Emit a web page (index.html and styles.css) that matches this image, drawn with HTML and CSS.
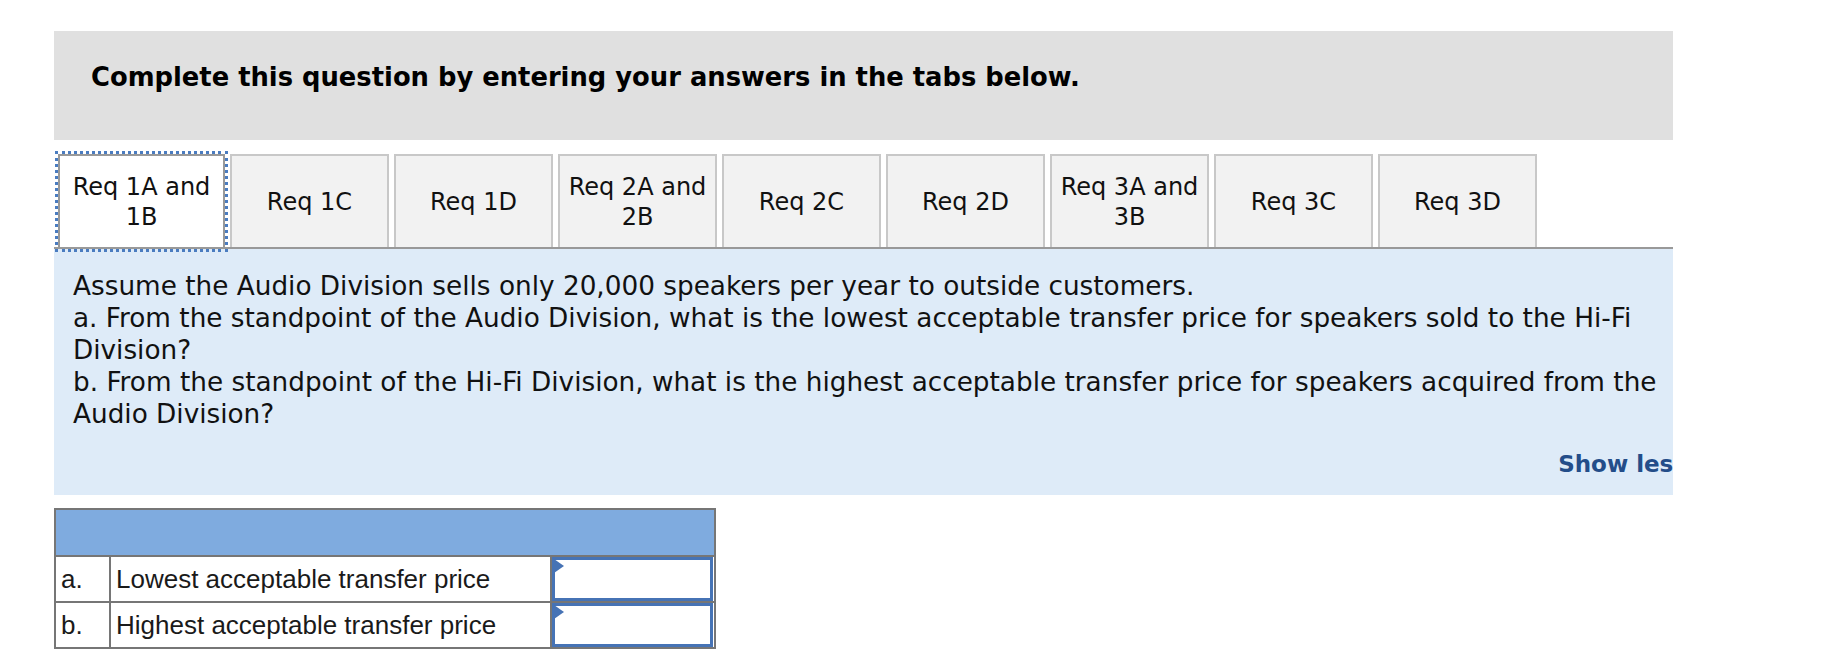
FILE: index.html
```html
<!DOCTYPE html>
<html>
<head>
<meta charset="utf-8">
<link rel="stylesheet" href="styles.css">
</head>
<body>
<div class="wrap">
  <div class="banner">
    <h1 class="banner-title">Complete this question by entering your answers in the tabs below.</h1>
  </div>

  <div class="tabs">
    <div class="tab tab-active">Req 1A and<br>1B</div>
    <div class="tab">Req 1C</div>
    <div class="tab">Req 1D</div>
    <div class="tab">Req 2A and<br>2B</div>
    <div class="tab">Req 2C</div>
    <div class="tab">Req 2D</div>
    <div class="tab">Req 3A and<br>3B</div>
    <div class="tab">Req 3C</div>
    <div class="tab">Req 3D</div>
  </div>

  <div class="panel">
    <p class="panel-text">Assume the Audio Division sells only 20,000 speakers per year to outside customers.<br>a. From the standpoint of the Audio Division, what is the lowest acceptable transfer price for speakers sold to the Hi-Fi Division?<br>b. From the standpoint of the Hi-Fi Division, what is the highest acceptable transfer price for speakers acquired from the Audio Division?</p>
    <div class="panel-foot"><span class="show-less">Show less</span></div>
  </div>

  <table class="answers">
    <colgroup>
      <col class="col-letter">
      <col class="col-label">
      <col class="col-input">
    </colgroup>
    <tr class="answers-head"><td colspan="3"></td></tr>
    <tr>
      <td class="c-letter">a.</td>
      <td class="c-label">Lowest acceptable transfer price</td>
      <td class="c-input"><div class="input-box"><span class="input-flag"></span></div></td>
    </tr>
    <tr>
      <td class="c-letter">b.</td>
      <td class="c-label">Highest acceptable transfer price</td>
      <td class="c-input"><div class="input-box"><span class="input-flag"></span></div></td>
    </tr>
  </table>
</div>
</body>
</html>
```

FILE: styles.css
```css
html, body {
  margin: 0;
  padding: 0;
  background: #ffffff;
}

body {
  font-family: "DejaVu Sans", Verdana, sans-serif;
  color: #000;
}

.wrap {
  margin-left: 54px;
  width: 1619px;
  padding-top: 31px;
}

.banner {
  background: #e0e0e0;
  height: 109px;
  box-sizing: border-box;
  padding: 31px 0 0 37px;
}

.banner-title {
  margin: 0;
  font-size: 25.8px;
  line-height: 30px;
  font-weight: bold;
}

.tabs {
  margin-top: 14px;
  display: flex;
  border-bottom: 2px solid #999999;
}

.tab {
  box-sizing: border-box;
  width: 159px;
  height: 93px;
  margin-left: 5px;
  background: #f2f2f2;
  border: 2px solid #c8c8c8;
  border-bottom: none;
  display: flex;
  align-items: center;
  justify-content: center;
  text-align: center;
  font-size: 24px;
  line-height: 30px;
  color: #111;
}

.tab-active {
  width: 167px;
  margin-left: 4px;
  background: #ffffff;
  border: 2px solid #999999;
  height: 95px;
  margin-bottom: -2px;
  outline: 3px dotted #4a7cc0;
  outline-offset: 0;
  position: relative;
}

.panel {
  background: #deebf8;
  height: 246px;
  box-sizing: border-box;
  padding: 21px 6px 0 19px;
  overflow: hidden;
}

.panel-text {
  margin: 0;
  font-size: 26.3px;
  line-height: 32px;
  color: #111;
}

.panel-foot {
  display: flex;
  justify-content: flex-end;
  margin-top: 18px;
}

.show-less {
  font-size: 23px;
  line-height: 32px;
  font-weight: bold;
  color: #234d89;
  margin-right: -20px;
  white-space: nowrap;
}

.answers {
  margin-top: 13px;
  border-collapse: collapse;
  table-layout: fixed;
  width: 660px;
  font-family: "Liberation Sans", Arial, sans-serif;
  font-size: 26px;
  color: #1a1a1a;
}

.col-letter { width: 55px; }
.col-label { width: 441px; }
.col-input { width: 164px; }

.answers td {
  border: 2px solid #767676;
  padding: 0;
  white-space: nowrap;
}

.answers-head td {
  background: #7fabdf;
  height: 45px;
}

.c-letter {
  height: 44px;
  padding-left: 5px !important;
}

.c-label {
  padding-left: 5px !important;
}

.c-input {
  vertical-align: top;
}

.input-box {
  position: relative;
  box-sizing: border-box;
  height: 44px;
  margin: 0 1px 0 0;
  border: 3px solid #4673b5;
  background: #fff;
}

.input-flag {
  position: absolute;
  top: -1px;
  left: -1px;
  width: 0;
  height: 0;
  border-left: 10px solid #4673b5;
  border-top: 7px solid transparent;
  border-bottom: 7px solid transparent;
}
```
